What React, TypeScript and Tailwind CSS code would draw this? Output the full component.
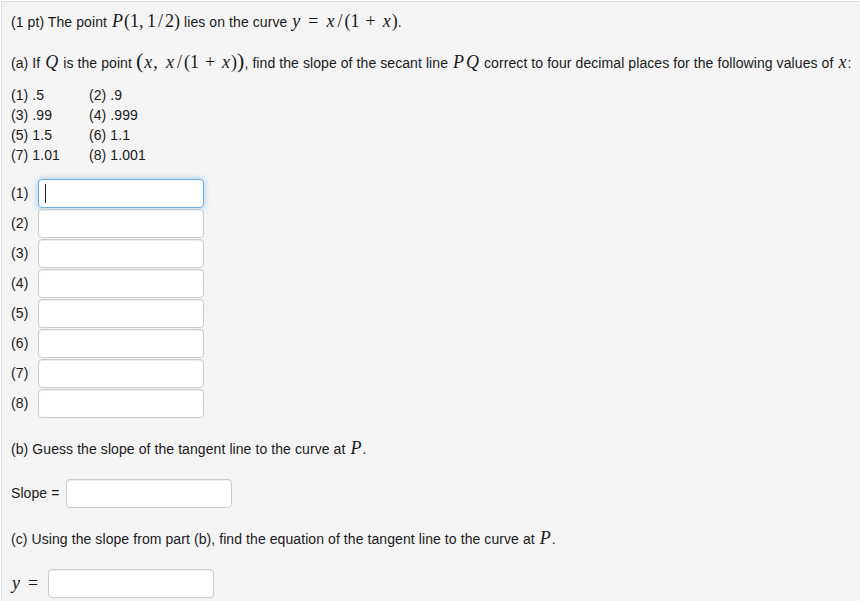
const M = ({ children }: { children: React.ReactNode }) => (
  <span className="font-['Liberation_Serif',serif] text-[18px] leading-[20px] tracking-normal whitespace-nowrap">
    {children}
  </span>
);

// italic math variable, a bit wider like the TeX glyphs
const V = ({ children }: { children: React.ReactNode }) => (
  <i className="italic px-[1px]">{children}</i>
);

const Eq = () => <span className="mx-[7px]">=</span>;
const Plus = () => <span className="mx-[6px]">+</span>;
const Sl = () => <span className="px-[2px]">/</span>;

const Box = ({ focused = false }: { focused?: boolean }) => (
  <div className="relative">
    <input
      readOnly
      className={
        focused
          ? "block w-[166px] h-[29px] bg-white rounded-[4px] border border-[#66afe9] outline-none shadow-[0_0_6px_rgba(102,175,233,0.6)]"
          : "block w-[166px] h-[29px] bg-white rounded-[4px] border border-[#cccccc] outline-none shadow-[inset_0_1px_1px_rgba(0,0,0,0.075)]"
      }
    />
    {focused && (
      <span className="absolute left-[7px] top-[5px] w-px h-[19px] bg-[#222]" />
    )}
  </div>
);

const values = [
  ["(1) .5", "(2) .9"],
  ["(3) .99", "(4) .999"],
  ["(5) 1.5", "(6) 1.1"],
  ["(7) 1.01", "(8) 1.001"],
];

export default function App() {
  return (
    <div className="bg-white min-h-[601px] pt-px pl-px font-['Liberation_Sans',Arial,sans-serif] text-[14px] tracking-[0.08px] text-[#1a1a1a]">
      <div className="bg-[#f4f4f4] border-t border-l border-[#dddddd] min-h-[600px] pl-[9px] pt-[9px]">
        <p className="h-[20px] leading-[20px] whitespace-nowrap">
          (1 pt) The point{" "}
          <M>
            <V>P</V>(1,&thinsp;1<Sl />2)
          </M>{" "}
          lies on the curve{" "}
          <M>
            <V>y</V>
            <Eq />
            <V>x</V>
            <Sl />
            (1
            <Plus />
            <V>x</V>)
          </M>
          .
        </p>

        <p className="mt-[20px] h-[20px] leading-[20px] whitespace-nowrap">
          (a) If{" "}
          <M>
            <V>Q</V>
          </M>{" "}
          is the point{" "}
          <M>
            <span className="text-[22px]">(</span>
            <V>x</V>,&thinsp;&thinsp;<V>x</V>
            <Sl />
            (1
            <Plus />
            <V>x</V>)<span className="text-[22px]">)</span>
          </M>
          , find the slope of the secant line{" "}
          <M>
            <V>P</V>
            <V>Q</V>
          </M>{" "}
          correct to four decimal places for the following values of{" "}
          <M>
            <V>x</V>
          </M>
          :
        </p>

        <div className="mt-[14px] flex flex-col">
          {values.map(([a, b]) => (
            <div key={a} className="flex h-[20px] leading-[20px]">
              <span className="w-[78px]">{a}</span>
              <span>{b}</span>
            </div>
          ))}
        </div>

        <div className="mt-[13px] flex flex-col">
          {[1, 2, 3, 4, 5, 6, 7, 8].map((n) => (
            <div key={n} className="flex items-center h-[30px]">
              <span className="w-[27px]">({n})</span>
              <Box focused={n === 1} />
            </div>
          ))}
        </div>

        <p className="mt-[20px] h-[20px] leading-[20px]">
          (b) Guess the slope of the tangent line to the curve at{" "}
          <M>
            <V>P</V>
          </M>
          .
        </p>

        <div className="mt-[20px] flex items-center gap-[7px] h-[30px]">
          <span>Slope =</span>
          <Box />
        </div>

        <p className="mt-[20px] h-[20px] leading-[20px]">
          (c) Using the slope from part (b), find the equation of the tangent
          line to the curve at{" "}
          <M>
            <V>P</V>
          </M>
          .
        </p>

        <div className="mt-[20px] flex items-center gap-[3px] h-[30px]">
          <M>
            <V>y</V>
            <Eq />
          </M>
          <Box />
        </div>
      </div>
    </div>
  );
}
